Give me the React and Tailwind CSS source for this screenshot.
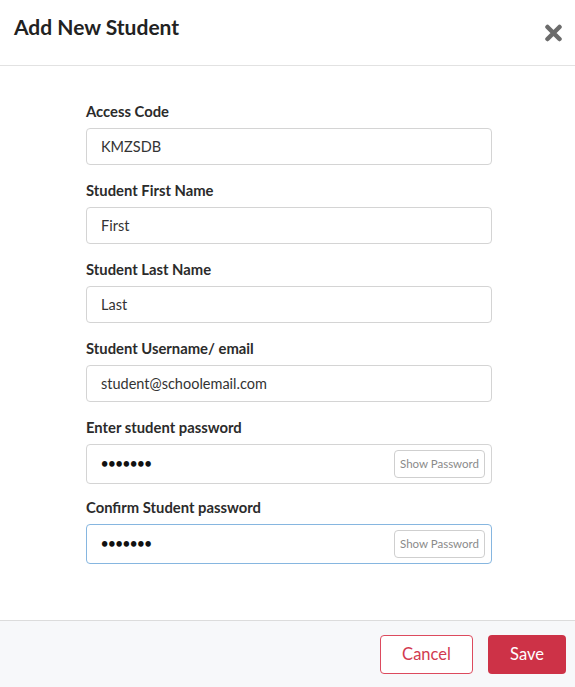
import React from "react";

const font = { fontFamily: "Lato, 'Noto Sans', 'Liberation Sans', sans-serif" };

function Label({ children }) {
  return (
    <div className="text-[14.8px] leading-[20px] font-bold text-[#2b2b2b] mb-[7px]">{children}</div>
  );
}

function TextField({ label, value }) {
  return (
    <div className="mb-[15px]">
      <Label>{label}</Label>
      <div className="h-[37px] w-[406px] rounded-[4px] border border-[#d4d4d4] bg-white flex items-center pl-[14px] text-[14.5px] text-[#333]">
        {value}
      </div>
    </div>
  );
}

function PasswordField({ label, focused, mb }) {
  return (
    <div className={mb}>
      <Label>{label}</Label>
      <div
        className={
          "h-[40px] w-[406px] rounded-[4px] border bg-white flex items-center justify-between pl-[14px] pr-[6px] " +
          (focused ? "border-[#86b6e0]" : "border-[#d4d4d4]")
        }
      >
        <span className="text-[12.5px] text-[#111] tracking-[0px] leading-none font-bold">•••••••</span>
        <button className="h-[28px] w-[91px] rounded-[4px] border border-[#cfcfcf] bg-white text-[11.5px] text-[#8a8a8a]">
          Show Password
        </button>
      </div>
    </div>
  );
}

export default function App() {
  return (
    <div style={font} className="w-[575px] h-[687px] bg-white flex flex-col">
      <div className="h-[66px] border-b border-[#e2e2e2] flex justify-between pl-[14px] pr-[12px]">
        <div className="pt-[13px] text-[21px] leading-[28px] font-bold text-[#222]">Add New Student</div>
        <div className="pt-[24px]">
          <svg width="19" height="18" viewBox="0 0 19 18">
            <path d="M3.5 3 L15.5 15 M15.5 3 L3.5 15" stroke="#6b6b6b" strokeWidth="4.5" strokeLinecap="round" />
          </svg>
        </div>
      </div>
      <div className="flex-1 pt-[35px] pl-[86px]">
        <TextField label="Access Code" value="KMZSDB" />
        <TextField label="Student First Name" value="First" />
        <TextField label="Student Last Name" value="Last" />
        <TextField label="Student Username/ email" value="student@schoolemail.com" />
        <PasswordField label="Enter student password" mb="mb-[13px]" />
        <PasswordField label="Confirm Student password" focused />
      </div>
      <div className="h-[67px] border-t border-[#dcdcdc] bg-[#f7f8fa] flex items-center justify-end gap-[15px] pr-[9px] pt-[1px]">
        <button className="h-[39px] w-[93px] rounded-[4px] border border-[#dc4a5e] bg-white text-[16.5px] text-[#d23a4f]">
          Cancel
        </button>
        <button className="h-[39px] w-[78px] rounded-[4px] bg-[#cd3247] text-[16.5px] text-white">
          Save
        </button>
      </div>
    </div>
  );
}
